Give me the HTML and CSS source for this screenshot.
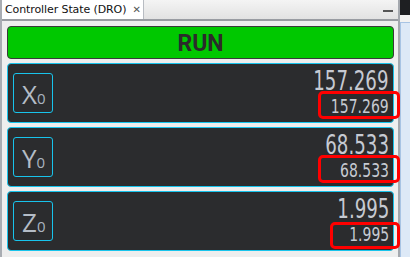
FILE: index.html
```html
<!DOCTYPE html>
<html>
<head>
<meta charset="utf-8">
<link rel="stylesheet" href="styles.css">
</head>
<body>
<div class="app">
  <div class="main">
    <div class="tabbar">
      <div class="tab"><span class="tab-title">Controller State (DRO)</span><span class="tab-close">&#x2715;</span></div>
      <div class="tab-spacer"></div>
      <div class="minimize"></div>
    </div>
    <div class="content">
      <div class="run">RUN</div>
      <div class="axis">
        <div class="axis-label">X<span class="sub">0</span></div>
        <div class="values"><div class="big"><span>157.269</span></div><div class="small"><span>157.269</span></div></div>
        <div class="highlight hl-wide"></div>
      </div>
      <div class="axis">
        <div class="axis-label">Y<span class="sub">0</span></div>
        <div class="values"><div class="big"><span>68.533</span></div><div class="small"><span>68.533</span></div></div>
        <div class="highlight hl-wide"></div>
      </div>
      <div class="axis">
        <div class="axis-label">Z<span class="sub">0</span></div>
        <div class="values"><div class="big"><span>1.995</span></div><div class="small"><span>1.995</span></div></div>
        <div class="highlight hl-narrow"></div>
      </div>
    </div>
  </div>
  <div class="divider"></div>
  <div class="side">
    <div class="side-top"></div>
    <div class="side-gap"></div>
    <div class="side-panel"></div>
  </div>
</div>
</body>
</html>
```
FILE: styles.css
```css
html, body {
  margin: 0;
  padding: 0;
}
body {
  width: 410px;
  height: 257px;
  overflow: hidden;
  background: #eeeeee;
  font-family: "Liberation Sans", Arial, sans-serif;
}
.app {
  display: flex;
  height: 257px;
}
.main {
  width: 396px;
  border-left: 2px solid #a9adb3;
  display: flex;
  flex-direction: column;
  background: #eeeeee;
}
.tabbar {
  height: 19px;
  display: flex;
  align-items: stretch;
  background: linear-gradient(#f4f4f4, #e2e2e2);
  border-bottom: 2px solid #999ca2;
}
.tab {
  width: 142px;
  background: #ffffff;
  border-right: 1px solid #b8bcc2;
  display: flex;
  align-items: center;
  padding-left: 3px;
  box-sizing: border-box;
}
.tab-title {
  font-family: "DejaVu Sans", sans-serif;
  font-size: 11px;
  color: #111111;
  letter-spacing: -0.1px;
}
.tab-close {
  margin-left: 6px;
  font-size: 10px;
  color: #555555;
  font-family: "DejaVu Sans", sans-serif;
}
.tab-spacer {
  flex: 1;
}
.minimize {
  width: 10px;
  height: 2px;
  background: #555555;
  align-self: center;
  margin-right: 5px;
  margin-top: 2px;
}
.content {
  display: flex;
  flex-direction: column;
  gap: 4px;
  padding: 5px 4px 0 5px;
}
.run {
  height: 33px;
  box-sizing: border-box;
  background: #00c800;
  border: 1px solid #3a3a3a;
  border-radius: 4px;
  display: flex;
  align-items: center;
  justify-content: center;
  font-family: Roboto, "Liberation Sans", sans-serif;
  font-weight: bold;
  font-size: 23px;
  color: #2b2b2b;
  padding-top: 1px;
}
.axis {
  position: relative;
  height: 60px;
  box-sizing: border-box;
  background: #2b2c2e;
  border: 1px solid #18c4ec;
  border-radius: 4px;
  display: flex;
  align-items: center;
  padding: 0 4px 0 5px;
}
.axis-label {
  width: 40px;
  height: 40px;
  box-sizing: border-box;
  border: 1px solid #18c4ec;
  border-radius: 3px;
  display: flex;
  align-items: flex-end;
  padding-left: 8px;
  padding-bottom: 8px;
  font-family: "Open Sans", "DejaVu Sans", sans-serif;
  font-size: 26px;
  line-height: 20px;
  color: #b4bcc6;
}
.axis-label .sub {
  font-size: 15px;
  line-height: 11px;
  margin-left: 0;
  color: #aab4c0;
}
.values {
  flex: 1;
  align-self: stretch;
  display: flex;
  flex-direction: column;
  align-items: flex-end;
  padding-top: 3px;
}
.big, .small {
  font-family: "DejaVu Sans", sans-serif;
  font-weight: normal;
  color: #c6cad2;
  white-space: nowrap;
}
.big span, .small span {
  display: inline-block;
  transform: scaleX(0.7);
  transform-origin: right center;
}
.big {
  font-size: 26px;
  line-height: 28px;
}
.small {
  font-size: 20px;
  line-height: 22px;
}
.highlight {
  position: absolute;
  border: 3px solid #ff0000;
  border-radius: 5px;
  box-sizing: border-box;
}
.hl-wide {
  left: 310px;
  top: 27px;
  width: 82px;
  height: 28px;
}
.hl-narrow {
  left: 322px;
  top: 30px;
  width: 70px;
  height: 27px;
}
.divider {
  width: 2px;
  background: #a4a8ae;
}
.side {
  flex: 1;
  display: flex;
  flex-direction: column;
}
.side-top {
  height: 15px;
  background: #1e1f22;
}
.side-gap {
  height: 7px;
  background: #f2f2f2;
}
.side-panel {
  flex: 1;
  background: #dde9f7;
  border-top: 1px solid #a8c4e4;
  border-left: 1px solid #a8c4e4;
}
```
